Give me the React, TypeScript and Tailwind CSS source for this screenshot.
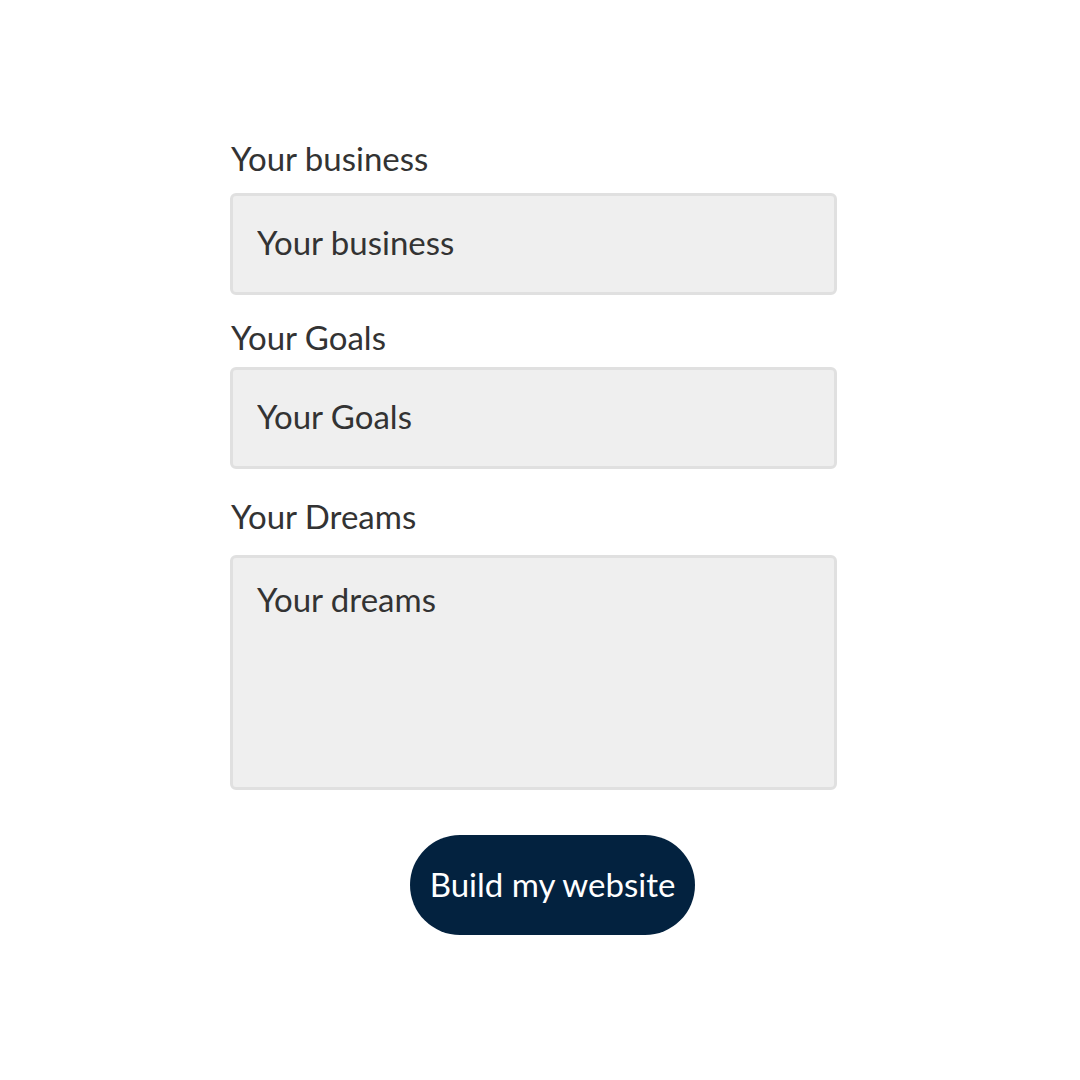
export default function App() {
  return (
    <div
      className="min-h-[1080px] w-[1080px] bg-white text-[#333333]"
      style={{ fontFamily: 'Lato, "Noto Sans", sans-serif' }}
    >
      <form className="ml-[230px] w-[607px] pt-[136px] flex flex-col">
        <label className="text-[33px] leading-[44px] pl-[1px]">Your business</label>
        <input
          className="mt-[13px] h-[102px] rounded-[6px] border-[3px] border-[#e0e0e0] bg-[#efefef] px-[24px] pb-[4px] text-[33px] text-[#333333] placeholder:text-[#333333] outline-none"
          placeholder="Your business"
        />
        <label className="mt-[20px] text-[33px] leading-[44px] pl-[1px]">Your Goals</label>
        <input
          className="mt-[8px] h-[102px] rounded-[6px] border-[3px] border-[#e0e0e0] bg-[#efefef] px-[24px] pb-[4px] text-[33px] text-[#333333] placeholder:text-[#333333] outline-none"
          placeholder="Your Goals"
        />
        <label className="mt-[25px] text-[33px] leading-[44px] pl-[1px]">Your Dreams</label>
        <textarea
          className="mt-[17px] h-[235px] resize-none rounded-[6px] border-[3px] border-[#e0e0e0] bg-[#efefef] px-[24px] pt-[19px] text-[33px] leading-[44px] text-[#333333] placeholder:text-[#333333] outline-none"
          placeholder="Your dreams"
        />
        <div className="mt-[45px] flex pl-[180px]">
          <button
            type="button"
            className="h-[100px] w-[285px] rounded-full bg-[#03223f] text-[33px] text-white"
          >
            Build my website
          </button>
        </div>
      </form>
    </div>
  )
}
